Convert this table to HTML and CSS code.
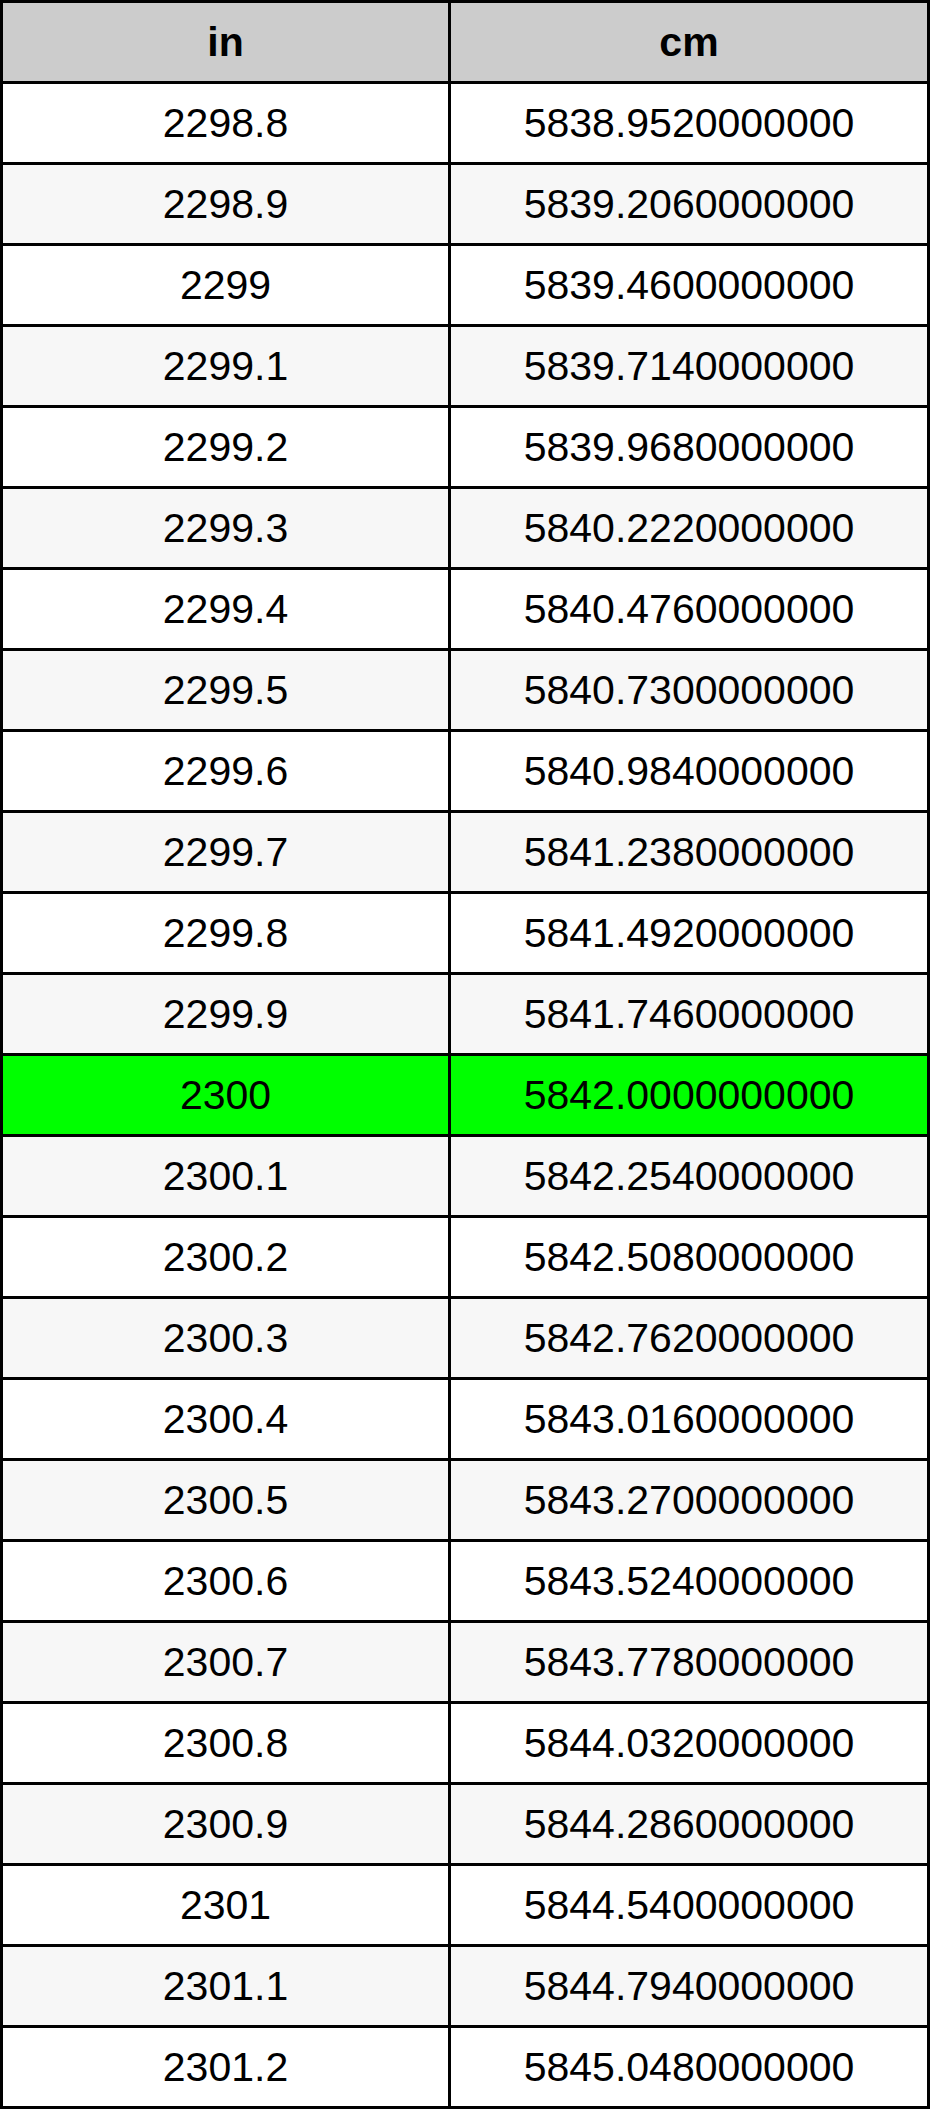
FILE: index.html
```html
<!DOCTYPE html>
<html>
<head>
<meta charset="utf-8">
<link rel="stylesheet" href="styles.css">
</head>
<body>
<table class="conv">
<thead>
<tr><th class="c1">in</th><th class="c2">cm</th></tr>
</thead>
<tbody>
<tr><td>2298.8</td><td>5838.9520000000</td></tr>
<tr><td>2298.9</td><td>5839.2060000000</td></tr>
<tr><td>2299</td><td>5839.4600000000</td></tr>
<tr><td>2299.1</td><td>5839.7140000000</td></tr>
<tr><td>2299.2</td><td>5839.9680000000</td></tr>
<tr><td>2299.3</td><td>5840.2220000000</td></tr>
<tr><td>2299.4</td><td>5840.4760000000</td></tr>
<tr><td>2299.5</td><td>5840.7300000000</td></tr>
<tr><td>2299.6</td><td>5840.9840000000</td></tr>
<tr><td>2299.7</td><td>5841.2380000000</td></tr>
<tr><td>2299.8</td><td>5841.4920000000</td></tr>
<tr><td>2299.9</td><td>5841.7460000000</td></tr>
<tr class="hl"><td>2300</td><td>5842.0000000000</td></tr>
<tr><td>2300.1</td><td>5842.2540000000</td></tr>
<tr><td>2300.2</td><td>5842.5080000000</td></tr>
<tr><td>2300.3</td><td>5842.7620000000</td></tr>
<tr><td>2300.4</td><td>5843.0160000000</td></tr>
<tr><td>2300.5</td><td>5843.2700000000</td></tr>
<tr><td>2300.6</td><td>5843.5240000000</td></tr>
<tr><td>2300.7</td><td>5843.7780000000</td></tr>
<tr><td>2300.8</td><td>5844.0320000000</td></tr>
<tr><td>2300.9</td><td>5844.2860000000</td></tr>
<tr><td>2301</td><td>5844.5400000000</td></tr>
<tr><td>2301.1</td><td>5844.7940000000</td></tr>
<tr><td>2301.2</td><td>5845.0480000000</td></tr>
</tbody>
</table>
</body>
</html>
```

FILE: styles.css
```css
html, body {
  margin: 0;
  padding: 0;
  background: #ffffff;
}

.conv {
  border-collapse: separate;
  border-spacing: 3px;
  background: #000000;
  width: 930px;
  table-layout: fixed;
  font-family: "Liberation Sans", Arial, sans-serif;
  font-size: 41px;
  color: #000000;
}

.conv th,
.conv td {
  height: 78px;
  padding: 0;
  text-align: center;
  vertical-align: middle;
  background: #ffffff;
  line-height: normal;
}

.conv .c1 {
  width: 445px;
}

.conv .c2 {
  width: 476px;
}

.conv th {
  background: #cccccc;
  font-weight: bold;
}

.conv tbody tr:nth-child(even) td {
  background: #f7f7f7;
}

.conv tbody tr.hl td {
  background: #00ff00;
}
```
